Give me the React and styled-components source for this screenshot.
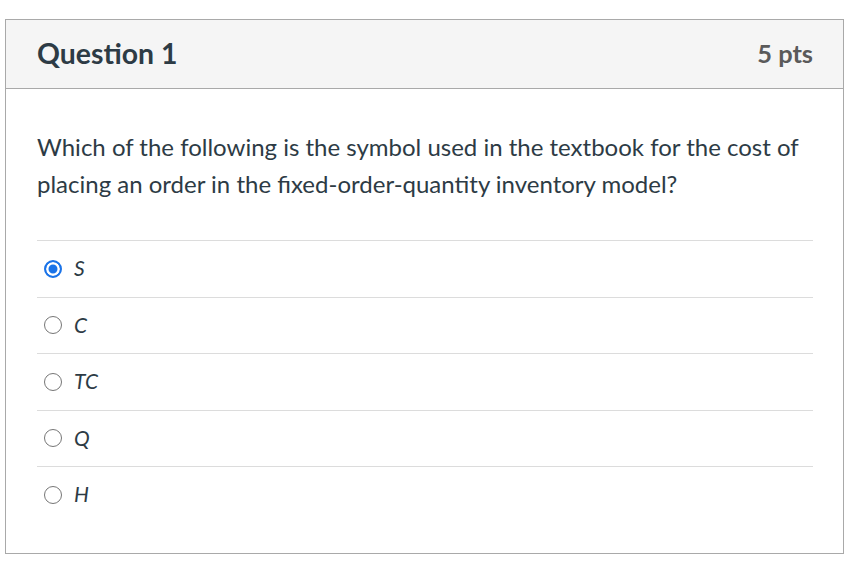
import React from "react";
import styled, { createGlobalStyle } from "styled-components";

const GlobalStyle = createGlobalStyle`
    body {
        margin: 0;
        background: #ffffff;
        font-family: Lato, "Open Sans", sans-serif;
    }
`;

const answers = ["S", "C", "TC", "Q", "H"];

const App = () => {
    return (
        <Page>
            <GlobalStyle />
            <Card>
                <Header>
                    <Title>Question 1</Title>
                    <Points>5 pts</Points>
                </Header>
                <Body>
                    <QuestionText>
                        Which of the following is the symbol used in the textbook for the cost of
                        placing an order in the fixed-order-quantity inventory model?
                    </QuestionText>
                    <AnswerList>
                        {answers.map((item, index) => (
                            <AnswerRow key={item}>
                                <Radio checked={index === 0} />
                                <AnswerLabel>{item}</AnswerLabel>
                            </AnswerRow>
                        ))}
                    </AnswerList>
                </Body>
            </Card>
        </Page>
    );
};

const Page = styled.div`
    padding: 19px 0 0 5px;
    width: 862px;
    height: 566px;
    box-sizing: border-box;
`;

const Card = styled.div`
    width: 839px;
    height: 535px;
    box-sizing: border-box;
    border: 1px solid #a9a9a9;
    display: flex;
    flex-direction: column;
`;

const Header = styled.div`
    height: 69px;
    box-sizing: border-box;
    background: #f5f5f5;
    border-bottom: 1px solid #a9a9a9;
    display: flex;
    align-items: center;
    justify-content: space-between;
    padding: 0 30px 2px 31px;
`;

const Title = styled.h2`
    margin: 0;
    font-size: 28.4px;
    font-weight: 700;
    color: #2d3b45;
`;

const Points = styled.span`
    font-size: 25.4px;
    font-weight: 700;
    color: #5a5a5a;
`;

const Body = styled.div`
    padding: 39px 30px 0 31px;
`;

const QuestionText = styled.p`
    margin: 0;
    font-size: 24px;
    line-height: 37px;
    color: #2d3b45;
`;

const AnswerList = styled.div`
    margin-top: 38px;
    display: flex;
    flex-direction: column;
`;

const AnswerRow = styled.div`
    height: 56.5px;
    box-sizing: border-box;
    border-top: 1px solid #dcdcdc;
    display: flex;
    align-items: center;
    gap: 12px;
    padding-left: 7px;
`;

const Radio = styled.span`
    width: 18px;
    height: 18px;
    box-sizing: border-box;
    border-radius: 50%;
    border: ${({ checked }) => (checked ? "2px solid #1a73e8" : "1.5px solid #767676")};
    background: ${({ checked }) => (checked ? "#1a73e8" : "#fff")};
    box-shadow: ${({ checked }) => (checked ? "inset 0 0 0 2.5px #fff" : "none")};
`;

const AnswerLabel = styled.span`
    font-size: 21px;
    line-height: 1;
    font-style: italic;
    color: #2d3b45;
    margin-top: -2px;
`;

export default App;
